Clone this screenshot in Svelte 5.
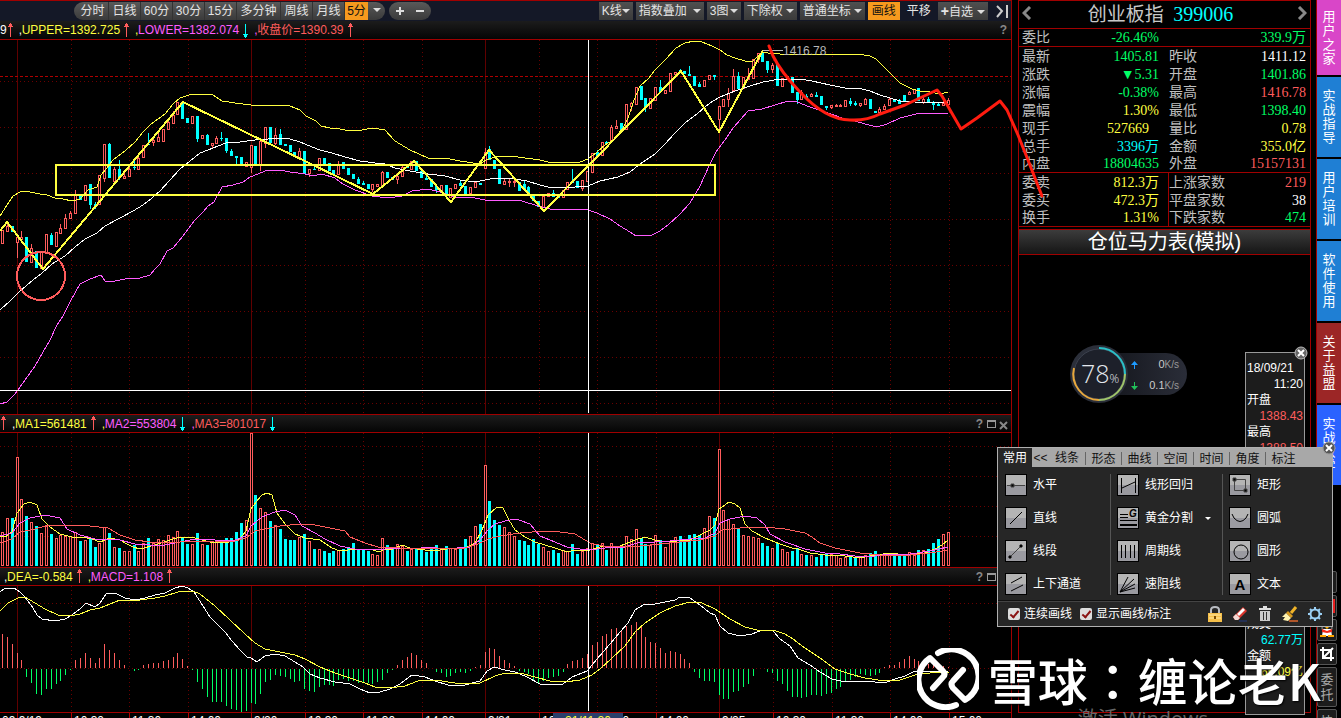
<script>
	const periods = ['分时', '日线', '60分', '30分', '15分', '多分钟', '周线', '月线', '5分'];
	let period = $state('5分');

	const menus = [
		{ label: 'K线', width: 34 }, { label: '指数叠加', width: 68 }, { label: '3图', width: 34 },
		{ label: '下除权', width: 53 }, { label: '普通坐标', width: 65 },
	];

	const mainParams = [
		{ text: '9', color: 'white', dir: 'up' },
		{ text: 'UPPER=1392.725', color: 'yellow', dir: 'up' },
		{ text: 'LOWER=1382.074', color: 'magenta', dir: 'down' },
		{ text: '收盘价=1390.39', color: 'red', dir: 'up' },
	];
	const volParams = [
		{ text: '', color: 'white', dir: 'up' },
		{ text: 'MA1=561481', color: 'yellow', dir: 'up' },
		{ text: 'MA2=553804', color: 'magenta', dir: 'down' },
		{ text: 'MA3=801017', color: 'red', dir: 'down' },
	];
	const macdParams = [
		{ text: 'DEA=-0.584', color: 'yellow', dir: 'up' },
		{ text: 'MACD=1.108', color: 'magenta', dir: 'up' },
	];

	// one bar per 5 minutes: direction, high, body top, body bottom, low, volume top, macd height
	const raw = `
u 230 230 243 244 532 34,u 221 226 231 231 518 31,d 226 226 232 232 518 24,u 235 237 242 258 457 15,u 231 237 239 240 499 8,d 237 237 262 262 516 -8,
u 244 248 262 262 522 -14,d 251 251 268 268 526 -25,u 252 252 268 268 533 -26,u 234 234 252 252 526 -20,d 233 235 245 245 534 -20,u 232 232 246 246 538 -15,
u 224 228 233 233 535 -12,u 214 218 228 228 536 -6,u 211 213 218 218 536 -1,u 190 195 213 213 532 8,d 195 195 200 200 541 10,u 185 185 200 200 540 15,
d 184 184 205 209 538 10,d 202 204 206 209 547 5,u 175 175 204 204 543 10,u 144 144 178 182 527 24,d 143 144 178 178 533 18,u 167 169 181 181 547 15,
d 160 169 178 180 548 8,u 172 176 178 178 551 3,u 165 169 176 176 551 0,d 160 167 168 170 545 -2,u 156 158 169 169 551 -1,u 145 145 157 157 543 3,
d 133 144 145 145 538 4,u 138 140 142 146 543 5,u 131 137 141 141 539 5,u 129 129 141 141 540 7,u 119 122 129 129 535 8,u 111 115 123 123 537 11,
u 102 102 114 114 531 15,d 102 102 119 119 538 9,d 118 118 123 123 544 2,u 116 116 123 123 544 -1,d 116 116 139 142 533 -13,u 135 135 138 138 544 -20,
d 134 135 145 145 545 -28,u 143 143 145 149 542 -33,u 136 138 143 143 542 -33,d 132 138 139 141 540 -33,d 138 138 151 153 538 -37,d 149 151 156 156 538 -40,
d 156 156 158 165 532 -41,d 157 157 165 165 523 -43,u 162 162 166 166 520 -42,u 145 145 167 173 433 -34,d 146 146 165 165 495 -35,u 141 141 165 171 508 -25,
u 127 127 143 148 512 -13,d 127 127 143 143 521 -11,u 128 135 143 145 525 -6,d 129 134 145 145 529 -7,d 144 144 146 146 539 -8,d 145 145 152 152 540 -10,
d 152 152 157 157 540 -13,u 148 151 157 157 537 -12,d 151 151 174 174 534 -20,u 169 169 173 177 541 -22,d 164 169 170 170 549 -23,u 158 158 170 170 549 -18,
d 158 158 166 166 551 -16,d 163 163 171 171 553 -16,d 170 170 174 174 551 -17,u 161 165 174 174 550 -11,d 162 162 169 169 549 -10,d 168 168 175 175 547 -12,
d 174 174 179 179 543 -12,d 177 179 184 184 549 -14,d 181 183 185 185 549 -14,d 184 184 189 189 551 -14,u 184 184 189 192 554 -15,u 184 184 186 186 555 -13,
u 171 172 185 185 538 -11,d 172 172 178 178 545 -4,d 177 177 180 180 548 -1,u 176 176 179 184 544 3,u 166 167 176 176 546 8,d 165 165 168 168 551 11,
u 161 161 169 169 549 15,d 161 161 171 171 549 13,d 171 171 178 178 548 8,d 176 178 180 180 552 5,d 179 179 187 187 549 0,d 186 186 190 193 545 -3,
u 185 185 190 190 549 -4,d 185 185 195 195 546 -8,u 188 188 197 197 548 -7,u 184 184 188 188 549 -4,d 180 183 186 186 547 -3,d 186 186 194 194 539 -4,
u 187 187 193 193 536 -2,u 181 182 187 187 526 1,d 183 183 185 185 524 3,u 148 152 168 168 465 16,d 146 149 160 160 501 20,d 160 160 169 169 520 19,
d 169 169 184 184 525 12,u 178 181 184 184 527 8,u 178 181 182 187 532 5,u 178 181 182 187 536 2,d 182 182 191 191 540 -2,d 181 184 190 190 541 -3,
d 186 187 196 196 545 -5,d 196 196 201 201 539 -11,d 201 201 207 207 544 -14,u 196 196 207 207 547 -12,u 193 193 196 196 551 -9,d 190 193 197 197 550 -8,
d 195 195 198 198 553 -7,u 190 190 197 198 550 -3,u 182 182 189 189 551 4,d 169 182 183 183 544 7,d 181 181 188 188 554 8,u 180 180 188 191 551 10,
u 171 171 181 181 548 14,u 153 153 172 172 543 23,d 150 152 157 157 544 26,u 142 142 155 155 543 32,d 141 142 144 144 550 34,u 125 127 140 140 543 39,
u 120 126 128 128 546 40,d 123 123 130 130 546 37,u 104 104 129 129 536 42,u 102 103 106 111 539 43,u 87 87 104 104 529 46,d 86 86 100 100 538 41,
d 98 98 108 112 544 31,u 98 98 108 108 545 26,u 87 87 100 100 535 25,d 80 87 92 92 540 20,u 90 90 93 93 547 15,u 73 73 91 91 541 17,
u 72 72 74 74 537 16,d 69 70 72 72 536 14,d 71 71 74 74 539 9,d 66 74 76 76 535 5,d 76 76 86 86 534 -3,d 82 84 87 87 535 -9,
u 80 80 86 86 528 -12,u 75 75 79 79 516 -12,d 75 75 77 80 518 -13,u 106 106 119 130 449 -26,u 99 99 106 107 510 -30,u 88 93 99 107 519 -30,
u 69 76 90 90 524 -23,d 72 76 89 89 529 -22,u 77 77 88 88 535 -18,u 68 76 79 79 536 -15,u 59 59 78 78 537 -7,u 53 53 59 63 538 0,
d 52 52 62 62 543 0,d 61 61 70 73 546 -3,u 63 65 69 73 548 -4,d 64 64 86 86 543 -12,u 78 78 86 86 549 -15,u 76 76 79 79 552 -22,
d 77 77 93 93 551 -28,d 92 92 100 104 548 -28,u 90 92 99 99 554 -29,d 94 96 99 99 555 -28,u 93 94 96 96 555 -26,d 92 95 97 97 557 -26,
d 96 96 105 105 554 -27,d 106 106 108 110 554 -25,u 105 105 107 109 554 -24,u 104 105 106 107 555 -20,u 104 105 106 107 558 -18,u 100 100 106 106 557 -13,
d 98 101 104 106 557 -11,d 101 103 105 106 557 -8,u 103 103 105 107 556 -5,u 98 99 104 104 555 -6,d 99 99 109 109 553 -7,d 111 111 113 113 551 -6,
u 107 109 112 113 555 -4,u 104 106 109 109 555 1,u 97 99 105 105 554 3,d 99 99 102 102 554 3,d 99 100 104 104 555 6,d 95 95 102 102 555 9,
u 91 92 94 94 552 12,u 89 89 93 93 555 9,d 88 88 101 101 550 7,u 96 99 102 104 550 5,d 97 99 102 102 549 4,d 101 102 105 110 543 3,
d 103 104 106 106 539 2,u 101 103 105 106 534 2,u 98 100 104 106 532 1`;

	const bars = raw.split(',').map((row, i) => {
		const [dir, ...n] = row.trim().split(' ');
		const [hi, top, bot, lo, vol, macd] = n.map(Number);
		return { x: Math.floor(17 + 4.875 * (i - 3)), up: dir === 'u', hi, top, bot, lo, vol, macd };
	});

	const days = [17, 251, 485, 719];
	const hours = [71, 129, 188, 305, 363, 422, 539, 597, 656, 773, 832, 890, 949];
	const axis = [
		[2, '09 9/19'], [74, '10:30'], [132, '11:30'], [191, '14:00'], [254, '9/20'], [308, '10:30'], [366, '11:30'], [425, '14:00'],
		[488, '9/21'], [542, '10:30'], [600, '11:30'], [659, '14:00'], [722, '9/25'], [776, '10:30'], [835, '11:30'], [893, '14:00'], [952, '15:00'],
	];

	const boll = {
		upper: '0,216 7,205 13,196 22,191 30,192 40,194 47,195 55,198 63,199 72,201 80,199 88,190 97,187 101,175 107,168 113,160 125,151 135,142 143,132 150,125 158,119 165,114 173,104 180,98 192,94 205,94 213,95 222,101 235,103 251,105 262,106 275,105 290,106 300,110 306,116 316,121 321,126 330,128 340,129 350,131 362,130 372,128 385,130 395,141 410,150 428,158 445,158 460,161 473,163 480,164 486,160 495,157 510,156 525,158 540,160 548,162 560,163 580,162 588,159 597,152 605,145 613,140 623,128 628,118 634,100 640,86 648,79 655,70 665,60 676,48 685,43 694,41 702,42 712,46 720,50 727,55 735,58 745,61 752,62 758,56 763,52 768,53 780,54 800,54 830,55 857,54 870,56 876,59 884,67 890,73 900,83 906,86 912,89 920,91 930,92 940,94 948,92',
		mid: '0,310 10,301 20,291 33,280 42,273 52,264 65,256 75,247 85,239 97,233 105,226 120,218 133,211 143,205 152,198 160,191 170,180 180,169 190,161 200,153 208,150 218,146 226,143 240,142 255,140 268,139 275,138 290,139 300,142 312,147 320,150 332,153 345,157 360,161 375,163 385,164 395,168 410,171 428,174 445,176 460,180 475,182 485,180 495,178 515,179 527,181 540,185 548,187 560,187 575,187 588,186 600,181 618,177 630,172 640,164 655,154 665,144 675,133 685,123 697,114 705,107 713,101 720,97 735,91 750,86 763,82 780,79 800,79 812,81 830,85 845,88 858,88 870,91 880,95 890,98 900,101 915,102 930,102 948,103',
		lower: '0,404 7,402 15,394 25,380 35,366 43,352 50,340 57,325 63,316 70,302 80,284 90,279 101,275 105,281 115,281 125,279 140,278 150,275 155,269 160,264 167,251 173,248 183,236 195,220 203,212 208,206 214,202 222,187 233,185 243,182 250,177 258,174 265,171 280,170 290,172 305,174 313,176 322,174 335,178 343,184 355,190 372,196 388,198 402,196 412,191 428,189 440,192 455,197 475,198 490,201 505,200 522,201 538,206 550,209 565,210 585,209 597,213 610,219 620,226 630,232 636,236 652,235 660,231 668,225 680,214 690,203 700,186 710,164 716,152 725,140 733,128 741,119 748,111 762,109 775,105 788,101 797,102 810,107 825,112 845,119 855,121 865,124 877,127 887,124 900,118 912,115 920,113 948,113',
	};
	const volMa = {
		ma1: '0,536 5,537 12,532 17,513 24,504 30,502 37,505 42,519 50,527 60,534 72,537 83,537 92,539 100,542 110,538 120,540 127,544 133,547 140,549 155,545 170,540 180,537 195,538 210,542 225,543 240,539 246,531 251,509 256,502 262,495 267,493 272,495 277,513 285,524 295,534 305,538 320,540 332,548 340,551 348,550 355,549 370,549 379,552 385,549 393,549 402,545 410,548 425,550 440,550 455,548 465,548 475,543 482,530 488,515 497,507 503,508 509,520 515,530 525,537 535,542 545,545 555,548 567,552 575,550 590,550 603,546 620,546 635,540 645,537 655,540 665,542 677,541 690,540 700,535 710,530 715,525 719,509 725,505 729,502 735,504 740,508 745,524 752,531 765,538 780,544 792,548 798,549 810,553 825,555 845,556 860,558 870,556 890,553 905,555 925,553 935,549 942,545 948,540',
		ma2: '0,536 12,533 20,523 30,518 45,515 60,518 67,529 80,535 95,539 110,539 120,540 135,544 150,545 160,546 175,543 195,539 215,540 235,540 246,536 251,526 262,517 275,512 285,510 295,515 302,526 315,533 325,539 340,546 355,549 370,550 385,549 400,548 415,549 428,547 445,549 470,547 480,540 488,530 495,524 505,521 516,519 530,524 540,536 555,542 567,547 580,549 590,550 605,548 625,547 640,542 655,542 670,541 690,539 705,538 715,533 720,523 730,519 745,516 757,518 765,525 770,534 785,542 805,549 825,553 840,554 855,556 875,556 890,554 910,554 930,551 948,547',
		ma3: '0,543 12,539 20,532 35,529 45,526 60,525 90,526 108,528 120,535 135,540 150,542 180,542 215,541 235,541 246,538 255,531 270,528 280,526 300,524 315,525 335,529 345,531 350,537 365,543 378,547 400,548 440,548 465,548 478,544 488,539 500,536 520,533 545,531 560,532 575,534 580,537 590,543 603,546 630,547 650,545 670,543 700,540 715,536 722,530 740,528 765,527 785,529 805,533 812,537 820,543 835,548 860,553 880,555 910,555 930,553 948,550',
	};
	const macdLine = {
		dif: '0,592 5,588 14,588 20,592 25,597 33,608 37,615 42,619 55,621 65,619 72,615 80,609 86,603 95,607 100,603 106,594 115,593 125,598 135,600 145,598 155,595 165,593 175,588 182,586 188,588 194,592 203,606 210,617 218,625 225,632 232,641 240,650 247,657 251,658 257,662 265,656 275,654 285,656 295,662 303,667 310,674 320,678 335,682 350,684 360,689 370,693 380,692 390,689 400,684 412,675 425,677 435,681 448,685 465,685 480,681 487,671 494,667 505,670 515,672 527,677 540,684 563,684 572,677 587,671 597,659 610,644 620,632 628,623 635,610 643,605 655,604 665,602 675,600 680,597 690,598 700,605 710,613 715,615 720,626 728,633 740,636 752,634 762,630 773,631 780,639 790,646 798,658 810,665 820,672 832,679 845,682 865,681 875,682 887,682 895,679 905,676 915,671 935,671 948,672',
		dea: '0,611 8,603 18,598 25,597 35,603 45,609 58,615 70,616 80,614 90,610 100,608 110,604 120,600 140,600 155,598 165,596 178,592 193,591 200,594 215,606 230,620 245,634 255,643 265,649 280,652 295,655 305,659 320,667 335,673 350,678 365,683 375,687 390,688 405,686 418,681 435,680 455,683 480,683 495,676 505,673 520,673 535,677 550,681 565,682 580,680 592,675 600,669 612,658 625,646 635,632 645,623 660,613 675,606 690,602 702,603 715,609 730,619 745,627 757,630 773,630 785,634 793,639 805,648 820,658 835,669 850,674 865,678 885,681 900,680 915,675 930,673 949,672',
	};

	const quotes = [
		['委比', '-26.46%', 'green', '', '339.9万', 'green'],
		['最新', '1405.81', 'green', '昨收', '1411.12', 'white'],
		['涨跌', '▼5.31', 'green', '开盘', '1401.86', 'green'],
		['涨幅', '-0.38%', 'green', '最高', '1416.78', 'red'],
		['震幅', '1.30%', 'yellow', '最低', '1398.40', 'green'],
		['现手', '527669', 'yellow lots', '量比', '0.78', 'yellow'],
		['总手', '3396万', 'cyan', '金额', '355.0亿', 'yellow'],
		['内盘', '18804635', 'green', '外盘', '15157131', 'red'],
		['委卖', '812.3万', 'yellow', '上涨家数', '219', 'red'],
		['委买', '472.3万', 'yellow', '平盘家数', '38', 'white'],
		['换手', '1.31%', 'yellow', '下跌家数', '474', 'green'],
	];

	const sideTabs = [
		{ text: '用户之家', color: 'pink' }, { text: '实战指导', color: 'blue' }, { text: '用户培训', color: 'blue' },
		{ text: '软件使用', color: 'blue' }, { text: '关于益盟', color: 'maroon' }, { text: '实战教学', color: 'royal' },
	];

	const toolTabs = ['线条', '形态', '曲线', '空间', '时间', '角度', '标注'];
	const toolCols = [
		[
			{ label: '水平', icon: '<path d="M1 10.5h18"/><path d="M5 9h3v3h-3z" fill="#000"/>' },
			{ label: '直线', icon: '<path d="M4 16L16 4" stroke="#000"/>' },
			{ label: '线段', icon: '<path d="M4 16L16 4"/><path d="M3 15h2v2h-2zM14 4h2v2h-2z" fill="#000" stroke="#000"/>' },
			{ label: '上下通道', icon: '<path d="M5 9L16 3M5 17L17 11" stroke="#000"/>' },
		],
		[
			{ label: '线形回归', icon: '<path d="M3.5 3v15M17.5 3v15M4 13L17 7" stroke="#000"/>' },
			{ label: '黄金分割', menu: true, icon: '<path d="M2 6.500h8M2 9.500h8M2 12.500h17" stroke="#000"/><path d="M2 17h17" stroke="#000" stroke-width="2"/><text x="11" y="9" font-size="10" font-weight="700" font-style="italic" fill="#000" stroke="none" font-family="Liberation Sans">G</text>' },
			{ label: '周期线', icon: '<path d="M3.500 4v13M7.500 4v13M12.500 4v13M16.500 4v13" stroke="#000"/>' },
			{ label: '速阻线', icon: '<path d="M2 18L10 3M2 18L16 5M2 18L17 10M2 18L17 14" stroke="#000"/>' },
		],
		[
			{ label: '矩形', icon: '<path d="M4.500 4.500h11v11h-11z"/><path d="M3 3h3v3h-3zM14 14h3v3h-3z" fill="#000"/>' },
			{ label: '圆弧', icon: '<path d="M2 6L4 10Q10 17 16 10L18 6" stroke="#000"/>' },
			{ label: '圆形', icon: '<circle cx="11" cy="11" r="7" stroke="#000"/>' },
			{ label: '文本', icon: '<text x="10" y="16" text-anchor="middle" font-size="15" font-weight="700" fill="#000" stroke="none" font-family="Liberation Sans">A</text>' },
		],
	];
	let keepDrawing = $state(true);
	let showDrawing = $state(true);
</script>

{#snippet arrow(dir)}
	<svg class="arrow" width="5" height="15" viewBox="0 0 5 15" shape-rendering="crispEdges" aria-hidden="true">
		{#if dir === 'up'}<path d="M2 0h1v14h-1zM1 1h3v2h-3zM0 3h5v1h-5z" fill="#ff5c5c" />
		{:else}<path d="M2 1h1v14h-1zM0 11h5v1h-5zM1 12h3v2h-3z" fill="#0ff" />{/if}
	</svg>
{/snippet}

{#snippet params(list)}
	{#each list as p, i}
		<span class="param {p.color}">{p.text}</span>{@render arrow(p.dir)}{#if i < list.length - 1}<span class="sep {p.color}">,</span>{/if}
	{/each}
{/snippet}

{#snippet windowButtons(full)}
	<div class="wbtns">
		<button aria-label="帮助">?</button>
		<button aria-label="最大化"><i class="max"></i></button>
		<button aria-label="关闭" class:ghost={!full}><svg width="9" height="9" viewBox="0 0 9 9"><path d="M1 1l7 7M8 1l-7 7" stroke="#888" stroke-width="2" /></svg></button>
	</div>
{/snippet}

{#snippet grid(y1, y2, rows)}
	{#each rows as y}<line class="dots" x1="0" x2="100%" y1={y + 0.5} y2={y + 0.5} />{/each}
	{#each hours as x}<line class="dots" x1={x + 0.5} x2={x + 0.5} {y1} {y2} />{/each}
	{#each days as x}<rect class="day" {x} y={y1} width="1" height={y2 - y1} />{/each}
{/snippet}

<div class="app">
	<main class="charts">
		<div class="toolbar">
			<div class="pill periods">
				{#each periods as p}<button class:active={period === p} onclick={() => period = p}>{p}</button>{/each}
				<button class="more" aria-label="更多周期"><i class="caret"></i></button>
			</div>
			<div class="pill zoom">
				<button aria-label="放大"><svg width="10" height="10" viewBox="0 0 10 10"><path d="M5 1v8M1 5h8" stroke="#ddd" stroke-width="2" /></svg></button>
				<button aria-label="缩小"><svg width="10" height="10" viewBox="0 0 10 10"><path d="M1 5h8" stroke="#ddd" stroke-width="2" /></svg></button>
			</div>
			<div class="tools">
				{#each menus as m}
					<label class="drop"><select aria-label={m.label} style="width: {m.width}px"><option>{m.label}</option></select><i class="caret"></i></label>
				{/each}
				<button class="box active">画线</button>
				<button class="plain">平移</button>
				<button class="box fav"><b>+</b>自选<i class="caret"></i></button>
				<button class="end" aria-label="收起"><svg width="13" height="13" viewBox="0 0 13 13"><path d="M1 1l5 5-5 6M11 0v13" fill="none" stroke="#ccc" stroke-width="2" /></svg></button>
			</div>
		</div>

		<div class="pbar first">{@render params(mainParams)}<div class="wbtns"><button aria-label="帮助">?</button></div></div>
		<svg class="plot price" role="img" aria-label="K线图">
			<g transform="translate(0 -40)" shape-rendering="crispEdges">
				{@render grid(40, 414, [81, 127, 173, 219, 265, 311, 357, 403])}
				<line x1="0" x2="100%" y1="76.5" y2="76.5" stroke="#b00000" stroke-dasharray="3 2" />
				{#each bars as b}
					{#if b.up}
						<line x1={b.x + 0.5} x2={b.x + 0.5} y1={b.hi} y2={b.lo} stroke="#ff5c5c" />
						<rect x={b.x - 0.5} y={b.top + 0.5} width="2" height={b.bot - b.top} fill="#000" stroke="#ff5c5c" />
					{:else}
						<line x1={b.x + 0.5} x2={b.x + 0.5} y1={b.hi} y2={b.lo} stroke="#0ff" />
						<rect x={b.x - 1} y={b.top} width="3" height={b.bot - b.top} fill="#0ff" />
					{/if}
				{/each}
				<polyline points={boll.upper} stroke="#ffff40" />
				<polyline points={boll.mid} stroke="#fff" />
				<polyline points={boll.lower} stroke="#ff5cff" />
				<line x1="0" x2="100%" y1="390.5" y2="390.5" stroke="#fff" />
				<line x1="588.5" x2="588.5" y1="40" y2="413" stroke="#fff" />
				<rect x="56" y="165" width="659" height="30" fill="none" stroke="#ffff40" stroke-width="2" />
				<polyline points="0,231 7,222 43,269 183,102 373,194 414,161 451,202 489,150 544,211 681,71 719,132 763,50" stroke="#ffff40" stroke-width="2" />
				<circle cx="41" cy="276" r="24" fill="none" stroke="#ff5c5c" stroke-width="2" />
				<line x1="763" x2="783" y1="50.500" y2="50.500" stroke="#c0c0c0" />
				<text x="783" y="55" class="peak">1416.78</text>
			</g>
		</svg>

		<div class="pbar">{@render params(volParams)}{@render windowButtons(true)}</div>
		<svg class="plot volume" role="img" aria-label="成交量">
			<g transform="translate(0 -433)" shape-rendering="crispEdges">
				{@render grid(433, 567, [446, 476, 506, 536])}
				{#each bars as b}
					{#if b.up}<rect x={b.x - 0.5} y={b.vol + 0.5} width="2" height={565 - b.vol} fill="#000" stroke="#ff5c5c" />
					{:else}<rect x={b.x - 1} y={b.vol} width="3" height={566 - b.vol} fill="#0ff" />{/if}
				{/each}
				<polyline points={volMa.ma1} stroke="#ffff40" />
				<polyline points={volMa.ma2} stroke="#ff5cff" />
				<polyline points={volMa.ma3} stroke="#ff5c5c" />
				<line x1="588.5" x2="588.5" y1="433" y2="565" stroke="#fff" />
			</g>
		</svg>

		<div class="pbar"><span class="sep lead white">,</span>{@render params(macdParams)}{@render windowButtons(false)}</div>
		<svg class="plot macd" role="img" aria-label="MACD">
			<g transform="translate(0 -586)" shape-rendering="crispEdges">
				{@render grid(586, 712, [603, 668])}
				{#each bars as b}
					{#if b.macd > 0}<rect x={b.x} y={668 - b.macd} width="1" height={b.macd} fill="#ff5c5c" />
					{:else}<rect x={b.x} y="669" width="1" height={-b.macd} fill="#00ff66" />{/if}
				{/each}
				<polyline points={macdLine.dif} stroke="#fff" />
				<polyline points={macdLine.dea} stroke="#ffff40" />
				<line x1="588.5" x2="588.5" y1="586" y2="711" stroke="#fff" />
			</g>
		</svg>
		<svg class="plot axis" role="img" aria-label="时间轴">
			{#each [...days, ...hours] as x}<rect {x} y="0" width="1" height="16" fill="#b00000" />{/each}
			{#each axis as [x, t]}<text {x} y="12">{t}</text>{/each}
			<rect x="553" y="0" width="70" height="16" fill="#2a3f6b" />
			<text x="565" y="12" class="now">21/11:20</text>
		</svg>
	</main>

	<aside class="quote">
		<header>
			<button aria-label="上一个"><svg width="10" height="14" viewBox="0 0 10 14"><path d="M8 1L2 7l6 6" /></svg></button>
			<h1>创业板指 <b>399006</b></h1>
			<button aria-label="下一个"><svg width="10" height="14" viewBox="0 0 10 14"><path d="M2 1l6 6-6 6" /></svg></button>
		</header>
		<table>
			<tbody>
				{#each quotes as [l1, v1, c1, l2, v2, c2], i}
					<tr class:rule={i === 0 || i === 7 || i === 10} class:split={i > 7}>
						<th>{l1}</th><td class={c1}>{v1}</td><th class="second">{l2}</th><td class={c2}>{v2}</td>
					</tr>
				{/each}
			</tbody>
		</table>
		<h2>仓位马力表(模拟)</h2>
		<div class="void"></div>
	</aside>

	<nav class="side">
		{#each sideTabs as t}<button class="tab {t.color}">{t.text}</button>{/each}
		<div class="icons">
			<button class="ib" aria-label="更多"><i class="caret"></i></button>
			<button class="ib" aria-label="提醒"><svg width="16" height="16"><rect x="1" y="1" width="15" height="14" fill="#e82020" /></svg></button>
			<button class="ib" aria-label="客服"><svg width="16" height="16" viewBox="0 0 16 16"><ellipse cx="8" cy="6" rx="5" ry="5" fill="#222" stroke="#999" /><path d="M4 7h8l1 7H3z" fill="#fff" /><path d="M3 7l5 2 5-2v3l-5 1-5-1z" fill="#f02818" /><path d="M6 5h4l-2 2z" fill="#ffb000" /><path d="M1 14h6M9 14h6" stroke="#ffa500" stroke-width="2" /></svg></button>
			<button class="ib" aria-label="截图"><svg width="16" height="16" viewBox="0 0 16 16"><path d="M1 4h11v11M4 1v11h11M5 11L14 2" fill="none" stroke="#fff" stroke-width="2" /></svg></button>
			<button class="ib tall">委托</button>
			<button class="ib tall">快讯</button>
		</div>
	</nav>

	<section class="info">
		<button class="close" aria-label="关闭"><svg width="14" height="14" viewBox="0 0 14 14"><circle cx="7" cy="7" r="6" fill="#666" stroke="#bbb" /><path d="M4 4l6 6M10 4l-6 6" stroke="#fff" stroke-width="2" /></svg></button>
		<div>
			<p>18/09/21</p><p class="num">11:20</p>
			<p>开盘</p><p class="num red">1388.43</p>
			<p>最高</p><p class="num red">1388.50</p>
		</div>
		<div>
			<p>成交</p><p class="num cyan">62.77万</p>
			<p>金额</p><p class="num yellow">65.09亿</p>
		</div>
	</section>

	<section class="speed">
		<div class="rates">
			<p><svg width="7" height="8" viewBox="0 0 7 8"><path d="M3.500 0L7 4H4v4H3V4H0z" fill="#1e9bff" /></svg><span>0<small>K/s</small></span></p>
			<p><svg width="7" height="8" viewBox="0 0 7 8"><path d="M3.500 8L0 4h3V0h1v4h3z" fill="#21c25a" /></svg><span>0.1<small>K/s</small></span></p>
		</div>
		<div class="dial">
			<svg width="60" height="60" viewBox="0 0 60 60" aria-hidden="true">
				<circle cx="30" cy="30" r="29" fill="#2b2f3a" />
				<circle cx="30" cy="30" r="25" fill="#1d202a" stroke="#3c414e" />
				<path d="M30 4A26 26 0 0 1 56 30" fill="none" stroke="#2bc0c8" stroke-width="2" />
				<path d="M56 30A26 26 0 0 1 30 56" fill="none" stroke="#9fc46a" stroke-width="2" />
				<path d="M30 56A26 26 0 0 1 5 24" fill="none" stroke="#e8a83c" stroke-width="2" />
			</svg>
			<span>78<small>%</small></span>
		</div>
	</section>

	<svg class="sketch" aria-hidden="true">
		<path d="M769 46L773 56Q781 72 800 92Q826 120 850 120Q866 121 880 114L905 105L937 90L942 96L961 129L977 118L1000 101L1007 110L1018 135L1026 155L1042 196" />
	</svg>

	<p class="activate">激活 Windows</p>

	<section class="palette">
		<button class="close" aria-label="关闭"><svg width="14" height="14" viewBox="0 0 14 14"><circle cx="7" cy="7" r="6" fill="#555" stroke="#999" /><path d="M4 4l6 6M10 4l-6 6" stroke="#fff" stroke-width="2" /></svg></button>
		<div class="ptabs">
			<button class="on">常用</button><button class="back">&lt;&lt;</button>
			{#each toolTabs as t}<button>{t}</button>{/each}
		</div>
		<div class="pcols">
			{#each toolCols as col}
				<div class="pcol">
					{#each col as tool}
						<button>
							<svg width="22" height="22" viewBox="-1 -1 22 22" fill="none" stroke="#444" stroke-width="1">{@html tool.icon}</svg>
							<span>{tool.label}</span>{#if tool.menu}<i class="caret"></i>{/if}
						</button>
					{/each}
				</div>
			{/each}
		</div>
		<div class="pfoot">
			<label><input type="checkbox" bind:checked={keepDrawing} />连续画线</label>
			<label><input type="checkbox" bind:checked={showDrawing} />显示画线/标注</label>
			<div class="acts">
				<button aria-label="锁定"><svg width="16" height="16" viewBox="0 0 16 16"><path d="M4 8V4q0-3 4-3t4 3v4" fill="none" stroke="#b9bcc2" stroke-width="2" /><rect x="1" y="7" width="14" height="9" fill="#f6c04a" /><path d="M2 9h12M2 12h12" stroke="#ffe9a8" /><path d="M7 10h2v3H7z" fill="#7a4a00" /></svg></button>
				<button aria-label="擦除"><svg width="16" height="16" viewBox="0 0 16 16"><path d="M1 11L11 1l4 4L6 14H3z" fill="#d9342b" /><path d="M5 8l6-6 2 2-6 6z" fill="#fff" /><path d="M1 11l3-3 4 4-2 2H3z" fill="#f2d9d4" /><path d="M7 15h8" stroke="#223a80" /></svg></button>
				<button aria-label="删除"><svg width="16" height="16" viewBox="0 0 16 16"><path d="M2 3h12M6 1h4" stroke="#ddd" stroke-width="2" /><path d="M3 5h10v10H3z" fill="#ccc" /><path d="M6.500 6v8M9.500 6v8" stroke="#333" /></svg></button>
				<button aria-label="清空"><svg width="16" height="16" viewBox="0 0 16 16"><path d="M14 1l-5 6" stroke="#f0b429" stroke-width="3" /><path d="M6 5l5 5-2 2-5-5z" fill="#d99a1c" /><path d="M4 7l5 5-3 3-5-1 2-3-3 0z" fill="#fff3b0" /><path d="M7 15h9" stroke="#b0562a" stroke-width="2" /></svg></button>
				<button aria-label="设置"><svg width="16" height="16" viewBox="0 0 16 16"><path d="M8 1v14M1 8h14M3 3l10 10M13 3L3 13" stroke="#9bd0f5" stroke-width="2" /><circle cx="8" cy="8" r="4.500" fill="#222" stroke="#9bd0f5" stroke-width="2" /></svg></button>
			</div>
		</div>
	</section>

	<div class="mark">
		<svg width="62" height="62" viewBox="0 0 62 62" fill="none" stroke="#fff" stroke-width="6" stroke-linecap="round" stroke-linejoin="round" aria-hidden="true">
			<path d="M21 5A27 27 0 0 1 48 52L36 40Q33 36 36 33L46 22M39 57A27 27 0 0 1 13 10L26 23Q29 26 26 29L16 40" />
		</svg>
		<span>雪球<span class="colon" lang="zh-TW">：</span>缠论老K</span>
	</div>
</div>

<style>
	:global(body) { margin: 0; background: #000; }
	.app { position: relative; display: flex; height: 100vh; overflow: hidden; background: #000; color: #fff; font: 12px/16px "Liberation Sans", "Noto Sans CJK SC", sans-serif; }
	button { margin: 0; padding: 0; border: 0; background: none; color: inherit; font: inherit; cursor: pointer; }
	p { margin: 0; }
	.white { color: #fff; } .yellow { color: #ffff40; } .magenta { color: #ff5cff; }
	.red { color: #ff5c5c; } .green { color: #00ff66; } .cyan { color: #0ff; }
	.caret { display: inline-block; border: 4px solid transparent; border-top: 4px solid #ddd; border-bottom: 0; }

	.charts { flex: 1; min-width: 0; border-top: 1px solid #a00000; border-right: 1px solid #a00000; margin-right: 6px; display: flex; flex-direction: column; overflow: hidden; }
	.toolbar { display: flex; flex: none; align-items: center; height: 20px; padding-left: 74px; background: #141827; color: #e4e4e4; }
	.pill { display: flex; height: 18px; border-radius: 9px; background: linear-gradient(#595959, #3a3a3a); overflow: hidden; }
	.periods { padding-left: 3px; }
	.periods button { padding: 0 2px; min-width: 32px; box-sizing: border-box; border-right: 1px solid #333; line-height: 18px; white-space: nowrap; }
	.periods button:nth-child(6) { min-width: 44px; }
	.periods button.active { min-width: 23px; padding: 0 1px; background: #f79a1e; color: #111; border: 0; }
	.periods .more { min-width: 17px; padding: 0 4px; border: 0; }
	.periods .more .caret { vertical-align: 3px; }
	.zoom { margin-left: 4px; padding: 0 3px; }
	.zoom button { width: 16px; height: 18px; }
	.zoom button + button { margin-left: 4px; }
	.zoom svg { display: block; margin: 4px auto; }
	.tools { display: flex; gap: 3px; margin-left: auto; padding-right: 2px; align-items: center; }
	.drop { position: relative; display: block; height: 18px; }
	.drop select { appearance: none; display: block; height: 18px; padding: 0 0 0 3px; border: 0; border-radius: 0; background: linear-gradient(#505050, #3a3a3a); color: inherit; font: inherit; }
	.drop .caret { position: absolute; right: 3px; top: 7px; pointer-events: none; }
	.box { height: 18px; padding: 0 4px; background: linear-gradient(#505050, #3a3a3a); white-space: nowrap; }
	.box.active { background: #f79a1e; color: #111; }
	.plain { padding: 0 4px; }
	.fav { padding: 0 3px; }
	.fav b { font-size: 14px; }
	.fav .caret { margin-left: 4px; vertical-align: 2px; }
	.end { margin-left: 5px; }
	.end svg { display: block; }

	.pbar { display: flex; flex: none; align-items: center; height: 17px; border-top: 1px solid #a00000; border-bottom: 1px solid #a00000; background: linear-gradient(#1c1c1c, #050505); white-space: nowrap; }
	.pbar.first { height: 18px; border-top: 0; }
	.pbar .arrow { margin: 0 6px 0 4px; }
	.first .arrow:first-of-type { margin-left: 1px; }
	.param:empty { display: none; }
	.param:empty + .arrow { margin-left: 1px; }
	.sep { width: 3px; }
	.sep.lead { margin-left: 4px; }
	.wbtns { display: flex; gap: 3px; margin-left: auto; padding-right: 3px; color: #888; font-weight: 700; }
	.wbtns button { width: 9px; height: 16px; line-height: 16px; }
	.wbtns svg { display: block; margin-top: 4px; }
	.wbtns .ghost { visibility: hidden; }
	.max { display: block; width: 7px; height: 5px; border: 1px solid #999; border-top-width: 2px; }

	.plot { display: block; flex: none; width: 100%; background: #000; }
	.price { height: 374px; } .volume { height: 134px; } .macd { height: 126px; }
	.axis { height: 16px; border-top: 1px solid #a00000; fill: #fff; }
	.axis .now { fill: #ffff40; }
	.plot polyline { fill: none; }
	.dots { stroke: #6a0000; stroke-dasharray: 1 3; }
	.day { fill: #600000; }
	.peak { fill: #b8b8b8; font-size: 12px; }

	.quote { display: flex; flex: none; flex-direction: column; box-sizing: border-box; width: 293px; margin-bottom: 5px; border: 1px solid #a00000; }
	.quote header { display: flex; align-items: center; justify-content: space-between; height: 27px; padding: 0 3px; border-bottom: 1px solid #a00000; }
	.quote header path { fill: none; stroke: #888; stroke-width: 3; }
	h1, h2 { margin: 0; font-size: 19px; font-weight: 400; line-height: 26px; }
	h1 { padding-right: 8px; color: #c8c8c8; }
	h1 b { margin-left: 4px; color: #0ff; font: 20px "Liberation Serif", serif; }
	table { width: 100%; table-layout: fixed; border-spacing: 0; font: 14px/17px "Liberation Serif", "Noto Sans CJK SC", serif; }
	th, td { box-sizing: border-box; height: 18px; padding: 0; line-height: 17px; font-weight: 400; white-space: nowrap; }
	.rule th, .rule td { border-bottom: 1px solid #a00000; }
	th { width: 48px; padding-left: 3px; text-align: left; color: #c0c0c0; }
	th.second { width: 60px; padding-left: 1px; }
	.split th.second { padding-left: 0; border-left: 1px solid #a00000; }
	td { text-align: right; }
	td:nth-child(2) { width: 101px; padding-right: 9px; }
	td:last-child { padding-right: 4px; }
	td.lots:nth-child(2) { padding-right: 19px; }
	h2 { margin-top: 2px; border: 1px solid #a00000; border-width: 1px 0; background: linear-gradient(#3c3c3c, #151515); line-height: 24px; text-align: center; font-size: 20px; }
	.void { flex: 1; }

	.side { display: flex; flex: none; flex-direction: column; gap: 2px; width: 24px; margin-left: 5px; border-left: 1px solid #a00000; }
	.tab { flex: none; box-sizing: border-box; width: 24px; height: 80px; padding: 0 5px; line-height: 14px; font-size: 13px; white-space: normal; word-break: break-all; }
	.tab.pink { height: 75px; background: #d946c8; }
	.blue { background: #1f7fd4; } .maroon { background: #9c2626; } .royal { background: #2a62ff; }
	.icons { display: flex; flex-direction: column; gap: 2px; margin-top: 84px; }
	.ib { box-sizing: border-box; width: 20px; height: 22px; padding: 1px; border: 1px solid #555; border-radius: 2px; background: #1c1c1c; color: #aaa; }
	.ib svg { display: block; }
	.ib.tall { height: 40px; line-height: 15px; font-size: 13px; }

	.info { position: absolute; right: 36px; top: 352px; bottom: 3px; display: flex; flex-direction: column; justify-content: space-between; box-sizing: border-box; width: 60px; padding: 7px 1px 34px; border: 1px solid #999; background: #1c1c1c; }
	.num { text-align: right; }
	.close { position: absolute; right: -4px; top: -7px; width: 14px; height: 14px; }
	.close svg { display: block; }

	.speed { position: absolute; right: 154px; top: 344px; display: flex; width: 118px; height: 60px; align-items: center; justify-content: flex-end; }
	.rates { box-sizing: border-box; width: 88px; height: 42px; padding: 1px 8px 0 32px; border-radius: 0 21px 21px 0; background: linear-gradient(90deg, #12141a, #2a2d38); color: #ccc; font-size: 11px; line-height: 20px; }
	.rates p { display: flex; align-items: center; justify-content: space-between; }
	.rates small { font-size: 10px; color: #999; }
	.dial { position: absolute; left: 0; top: 0; }
	.dial svg { display: block; }
	.dial span { position: absolute; left: 12px; top: 14px; color: #e4e8ee; font: 300 25px/30px "Open Sans", sans-serif; white-space: nowrap; }
	.dial small { font-size: 12px; }

	.sketch { position: absolute; inset: 0; width: 100%; height: 100%; pointer-events: none; }
	.sketch path { fill: none; stroke: #ff1c10; stroke-width: 3; stroke-linecap: round; stroke-linejoin: round; }
	.activate { position: absolute; right: 133px; bottom: -13px; color: #666; font: 20px/24px "Open Sans", "Noto Sans CJK SC", sans-serif; }

	.palette { position: absolute; right: 8px; top: 447px; box-sizing: border-box; width: 336px; border: 1px solid #b0b0b0; background: #262626; }
	.ptabs { display: flex; height: 19px; background: #a8a8a8; color: #111; }
	.ptabs button { position: relative; width: 36px; line-height: 21px; white-space: nowrap; }
	.ptabs button.on { width: 34px; background: #262626; color: #fff; }
	.ptabs button.back { width: 17px; }
	.ptabs button:nth-child(n+4) { border-left: 1px solid #666; box-sizing: border-box; height: 13px; margin-top: 4px; line-height: 14px; }
	.pcols { display: grid; grid-template-columns: 112px 112px 1fr; margin-top: 7px; padding-bottom: 5px; border-bottom: 1px solid #111; }
	.pcol { display: flex; flex-direction: column; gap: 11px; padding: 0 6px; border-left: 1px solid #555; }
	.pcol:first-child { border-left-color: transparent; }
	.pcol button { display: flex; align-items: center; gap: 6px; height: 22px; line-height: 18px; white-space: nowrap; }
	.pcol svg { background: linear-gradient(#b4b4b4 50%, #9a9aa0 50%); outline: 1px solid #000; outline-offset: -1px; }
	.pcol .caret { margin-left: 6px; border-width: 3px; border-bottom: 0; border-top-color: #fff; }
	.pfoot { display: flex; align-items: center; gap: 8px; height: 24px; padding: 0 9px 0 10px; border-top: 1px solid #444; }
	.pfoot label { display: flex; align-items: center; gap: 4px; white-space: nowrap; }
	.pfoot input { appearance: none; width: 12px; height: 12px; margin: 0; border-radius: 2px; background: #ddd; }
	.pfoot input:checked::after { content: ''; display: block; width: 3px; height: 7px; margin: 1px 0 0 4px; border: solid #8a1414; border-width: 0 2px 2px 0; transform: rotate(40deg); }
	.acts { display: flex; gap: 9px; margin-left: auto; }
	.acts svg { display: block; }

	.mark { position: absolute; right: 20px; bottom: 6px; display: flex; align-items: center; gap: 9px; pointer-events: none; font: 500 50px/66px "Noto Sans CJK SC", sans-serif; white-space: nowrap; text-shadow: 1px 1px 2px #000; }
	.colon { font-family: "Noto Sans CJK TC", sans-serif; }
</style>
